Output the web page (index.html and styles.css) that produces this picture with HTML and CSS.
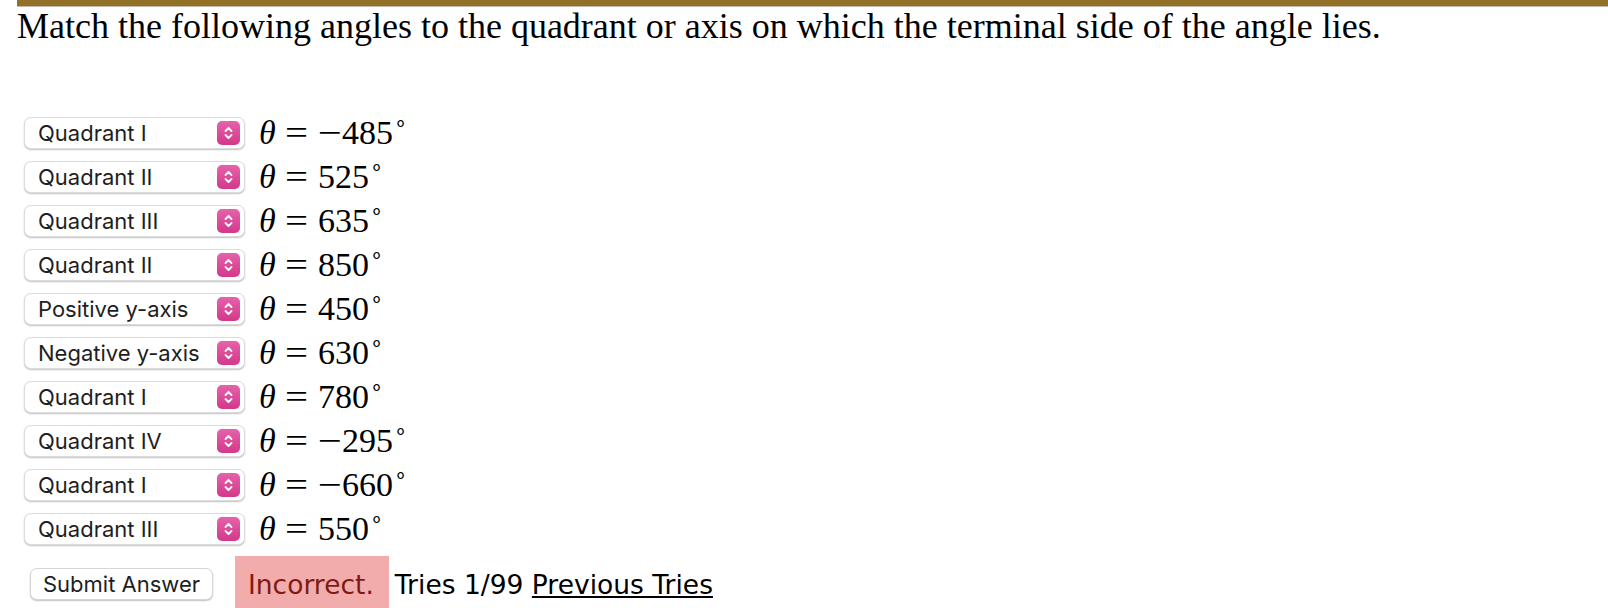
FILE: index.html
```html
<!DOCTYPE html>
<html lang="en">
<head>
  <meta charset="UTF-8" />
  <title>Angles and Quadrants</title>
  <link rel="stylesheet" href="styles.css">
</head>
<body>
  <div class="topbar"></div>
  <p class="prompt">Match the following angles to the quadrant or axis on which the terminal side of the angle lies.</p>

  <div class="rows">
    <div class="row">
      <div class="choice"><span>Quadrant I</span><svg class="stepper" viewBox="0 0 23 24"><use href="#step"/></svg></div>
      <div class="math"><i>θ</i><span class="eq">=</span><span class="neg">−</span>485<sup>∘</sup></div>
    </div>
    <div class="row">
      <div class="choice"><span>Quadrant II</span><svg class="stepper" viewBox="0 0 23 24"><use href="#step"/></svg></div>
      <div class="math"><i>θ</i><span class="eq">=</span>525<sup>∘</sup></div>
    </div>
    <div class="row">
      <div class="choice"><span>Quadrant III</span><svg class="stepper" viewBox="0 0 23 24"><use href="#step"/></svg></div>
      <div class="math"><i>θ</i><span class="eq">=</span>635<sup>∘</sup></div>
    </div>
    <div class="row">
      <div class="choice"><span>Quadrant II</span><svg class="stepper" viewBox="0 0 23 24"><use href="#step"/></svg></div>
      <div class="math"><i>θ</i><span class="eq">=</span>850<sup>∘</sup></div>
    </div>
    <div class="row">
      <div class="choice"><span>Positive y-axis</span><svg class="stepper" viewBox="0 0 23 24"><use href="#step"/></svg></div>
      <div class="math"><i>θ</i><span class="eq">=</span>450<sup>∘</sup></div>
    </div>
    <div class="row">
      <div class="choice"><span>Negative y-axis</span><svg class="stepper" viewBox="0 0 23 24"><use href="#step"/></svg></div>
      <div class="math"><i>θ</i><span class="eq">=</span>630<sup>∘</sup></div>
    </div>
    <div class="row">
      <div class="choice"><span>Quadrant I</span><svg class="stepper" viewBox="0 0 23 24"><use href="#step"/></svg></div>
      <div class="math"><i>θ</i><span class="eq">=</span>780<sup>∘</sup></div>
    </div>
    <div class="row">
      <div class="choice"><span>Quadrant IV</span><svg class="stepper" viewBox="0 0 23 24"><use href="#step"/></svg></div>
      <div class="math"><i>θ</i><span class="eq">=</span><span class="neg">−</span>295<sup>∘</sup></div>
    </div>
    <div class="row">
      <div class="choice"><span>Quadrant I</span><svg class="stepper" viewBox="0 0 23 24"><use href="#step"/></svg></div>
      <div class="math"><i>θ</i><span class="eq">=</span><span class="neg">−</span>660<sup>∘</sup></div>
    </div>
    <div class="row">
      <div class="choice"><span>Quadrant III</span><svg class="stepper" viewBox="0 0 23 24"><use href="#step"/></svg></div>
      <div class="math"><i>θ</i><span class="eq">=</span>550<sup>∘</sup></div>
    </div>
  </div>

  <div class="answer">
    <button class="btn">Submit Answer</button>
    <span class="verdict">Incorrect.</span>
    <span class="tries">Tries 1/99 <a href="#">Previous Tries</a></span>
  </div>

  <svg width="0" height="0" class="defs">
    <defs>
      <linearGradient id="pink" x1="0" y1="0" x2="0" y2="1">
        <stop offset="0" stop-color="#e662ab"/>
        <stop offset="1" stop-color="#d3388b"/>
      </linearGradient>
      <g id="step">
        <rect x="0" y="0" width="23" height="24" rx="5" fill="url(#pink)"/>
        <path d="M8.5 10 L11.5 7 L14.5 10 M8.5 14 L11.5 17 L14.5 14" fill="none" stroke="#fff" stroke-width="1.8" stroke-linecap="round" stroke-linejoin="round"/>
      </g>
    </defs>
  </svg>
</body>
</html>
```

FILE: styles.css
```css
body {
  margin: 0;
  background: #fff;
  color: #000;
  font-family: "Liberation Serif", "Times New Roman", serif;
  overflow: hidden;
}

.topbar {
  margin-left: 17px;
  height: 6px;
  background: #937027;
  border-bottom: 1px solid #c2baab;
}

.prompt {
  margin: 0 0 0 17px;
  font-size: 36px;
  line-height: 39px;
}

.rows {
  margin: 71px 0 0 24px;
  display: flex;
  flex-direction: column;
  gap: 12px;
}

.row {
  display: flex;
  align-items: center;
  gap: 14px;
  height: 32px;
}

.choice {
  box-sizing: border-box;
  width: 221px;
  height: 32px;
  display: flex;
  align-items: center;
  justify-content: space-between;
  padding: 0 4px 0 13px;
  background: #fff;
  border: 1px solid #dcdcdc;
  border-radius: 7px;
  box-shadow: 0 1px 1.5px rgba(0, 0, 0, 0.25);
  font-family: Inter, "Liberation Sans", sans-serif;
  font-size: 22px;
  color: #1e1e1e;
}

.stepper {
  width: 23px;
  height: 24px;
  flex: none;
}

.math {
  font-family: "Liberation Serif", "Times New Roman", serif;
  font-size: 34px;
  white-space: nowrap;
}

.eq {
  display: inline-block;
  margin: 0 12px 0 11px;
  transform: scaleX(1.2);
}

.neg {
  display: inline-block;
  margin: 0 3px 0 2px;
  transform: scaleX(1.25);
}

.math sup {
  font-size: 0.62em;
  vertical-align: 0;
  position: relative;
  top: -0.72em;
  margin-left: 1px;
}

.answer {
  display: flex;
  align-items: center;
  margin: 11px 0 0 30px;
  height: 56px;
}

.btn {
  box-sizing: border-box;
  width: 183px;
  height: 32px;
  padding: 0;
  background: #fff;
  border: 1px solid #d6d6d6;
  border-radius: 7px;
  box-shadow: 0 1px 1.5px rgba(0, 0, 0, 0.25);
  font-family: Inter, "Liberation Sans", sans-serif;
  font-size: 22px;
  color: #1e1e1e;
}

.verdict {
  margin-left: 22px;
  height: 56px;
  display: flex;
  align-items: center;
  padding: 0 15px 0 13px;
  background: #f2acac;
  color: #7f1a14;
  font-family: "DejaVu Sans", Verdana, sans-serif;
  font-size: 26.5px;
}

.tries {
  margin-left: 6px;
  font-family: "DejaVu Sans", Verdana, sans-serif;
  font-size: 26.5px;
}

.tries a {
  color: #000;
}

.defs {
  position: absolute;
}
```
